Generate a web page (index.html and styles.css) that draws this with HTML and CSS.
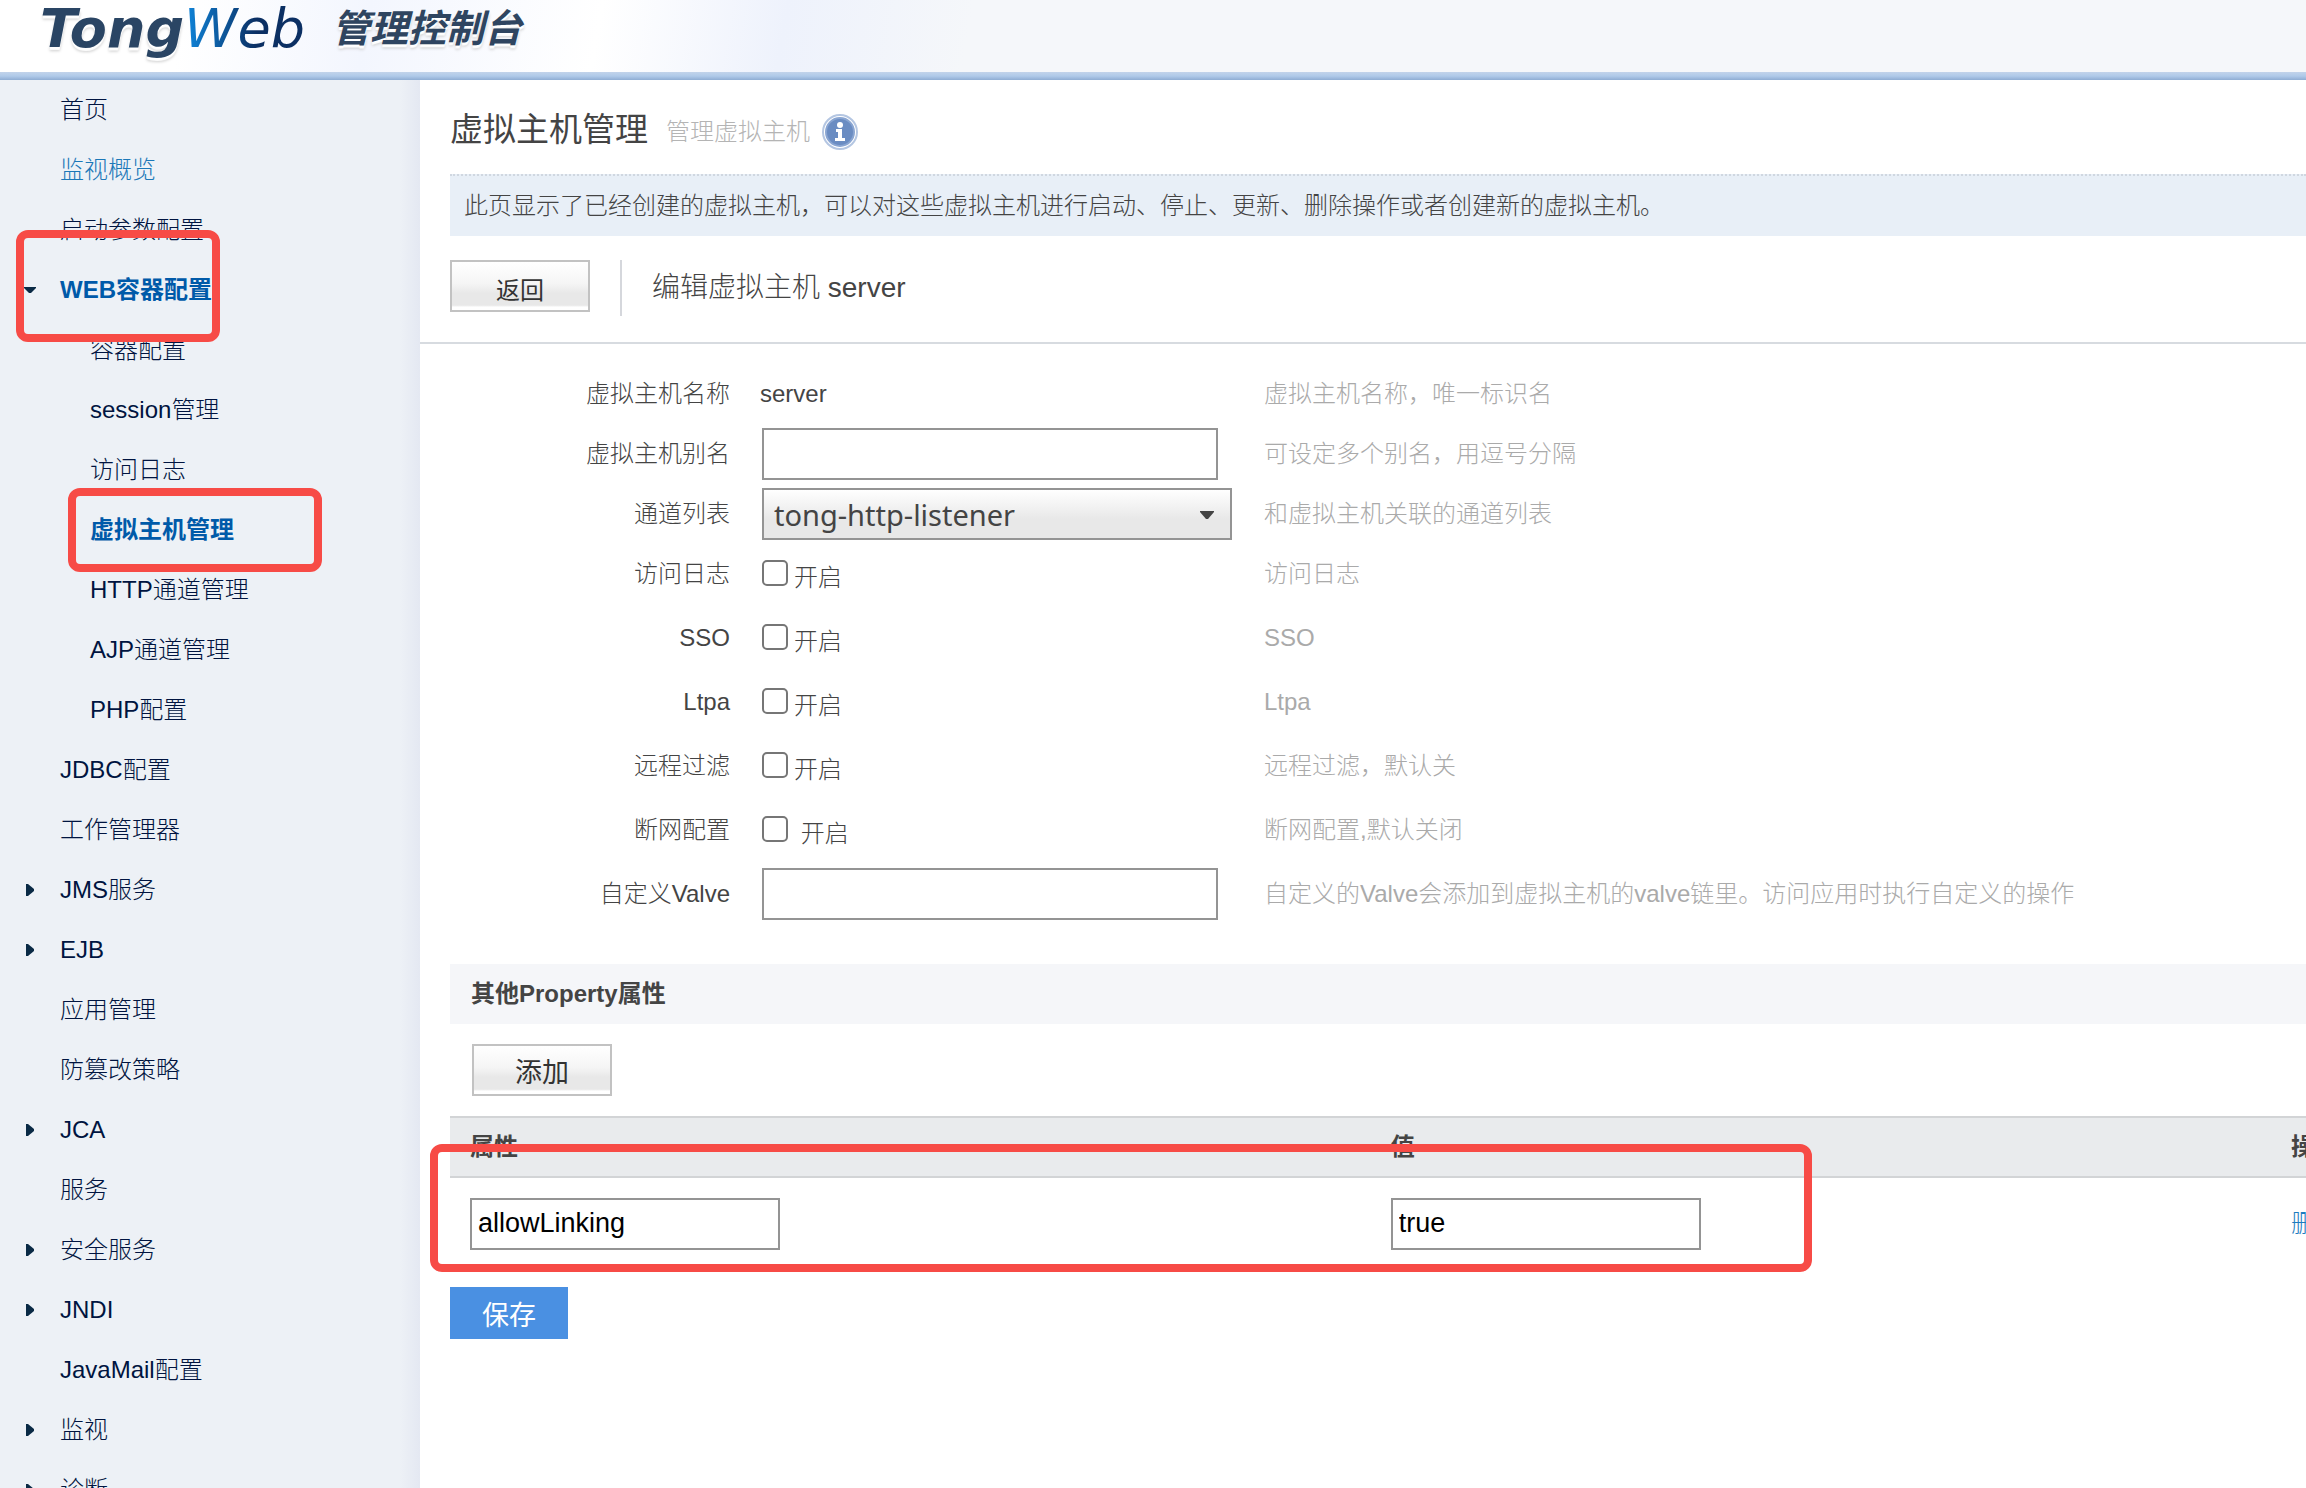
FILE: index.html
```html
<!DOCTYPE html>
<html lang="zh-CN">
<head>
  <meta charset="UTF-8">
  <meta name="viewport" content="width=device-width, initial-scale=1.0">
  <title>TongWeb 管理控制台</title>
  <link rel="stylesheet" href="styles.css">
</head>
<body>
  <header class="header">
    <div class="logo"><span class="tong">Tong</span><span class="web">Web</span></div>
    <div class="logo-title">管理控制台</div>
  </header>

  <div class="layout">
    <nav class="sidebar">
      <ul class="menu">
        <li><a href="#">首页</a></li>
        <li><a href="#" class="hover">监视概览</a></li>
        <li><a href="#">启动参数配置</a></li>
        <li class="open">
          <svg class="arrow" width="12" height="6" viewBox="0 0 12 6"><path d="M0 0h12v1L7 6H5L0 1z"/></svg>
          <a href="#" class="active">WEB容器配置</a>
          <span class="mark mark-group"></span>
        </li>
        <li class="sub"><a href="#">容器配置</a></li>
        <li class="sub"><a href="#">session管理</a></li>
        <li class="sub"><a href="#">访问日志</a></li>
        <li class="sub">
          <a href="#" class="active">虚拟主机管理</a>
          <span class="mark mark-item"></span>
        </li>
        <li class="sub"><a href="#">HTTP通道管理</a></li>
        <li class="sub"><a href="#">AJP通道管理</a></li>
        <li class="sub"><a href="#">PHP配置</a></li>
        <li><a href="#">JDBC配置</a></li>
        <li><a href="#">工作管理器</a></li>
        <li><svg class="arrow" width="8" height="12" viewBox="0 0 8 12"><path d="M0 0h2l6 5v2l-6 5H0z"/></svg><a href="#">JMS服务</a></li>
        <li><svg class="arrow" width="8" height="12" viewBox="0 0 8 12"><path d="M0 0h2l6 5v2l-6 5H0z"/></svg><a href="#">EJB</a></li>
        <li><a href="#">应用管理</a></li>
        <li><a href="#">防篡改策略</a></li>
        <li><svg class="arrow" width="8" height="12" viewBox="0 0 8 12"><path d="M0 0h2l6 5v2l-6 5H0z"/></svg><a href="#">JCA</a></li>
        <li><a href="#">服务</a></li>
        <li><svg class="arrow" width="8" height="12" viewBox="0 0 8 12"><path d="M0 0h2l6 5v2l-6 5H0z"/></svg><a href="#">安全服务</a></li>
        <li><svg class="arrow" width="8" height="12" viewBox="0 0 8 12"><path d="M0 0h2l6 5v2l-6 5H0z"/></svg><a href="#">JNDI</a></li>
        <li><a href="#">JavaMail配置</a></li>
        <li><svg class="arrow" width="8" height="12" viewBox="0 0 8 12"><path d="M0 0h2l6 5v2l-6 5H0z"/></svg><a href="#">监视</a></li>
        <li><svg class="arrow" width="8" height="12" viewBox="0 0 8 12"><path d="M0 0h2l6 5v2l-6 5H0z"/></svg><a href="#">诊断</a></li>
      </ul>
    </nav>

    <main class="main">
      <div class="page-title">
        <h1>虚拟主机管理</h1>
        <small>管理虚拟主机</small>
        <svg width="36" height="38" viewBox="0 0 36 38">
          <circle cx="18" cy="19" r="17" fill="#fff" stroke="#b4c6e2" stroke-width="2"/>
          <circle cx="18" cy="19" r="14" fill="#6a8cc2" stroke="#89a5d2" stroke-width="2"/>
          <circle cx="18" cy="12" r="3" fill="#fff"/>
          <path d="M14 16h6v9h3v3h-10v-3h3v-6h-2z" fill="#fff"/>
        </svg>
      </div>
      <p class="notice">此页显示了已经创建的虚拟主机，可以对这些虚拟主机进行启动、停止、更新、删除操作或者创建新的虚拟主机。</p>

      <div class="toolbar">
        <button type="button" class="btn btn-back">返回</button>
        <h2>编辑虚拟主机 server</h2>
      </div>

      <form class="content">
        <div class="row">
          <span class="label">虚拟主机名称</span>
          <div class="field">server</div>
          <span class="hint">虚拟主机名称，唯一标识名</span>
        </div>
        <div class="row">
          <label class="label" for="alias">虚拟主机别名</label>
          <div class="field"><input type="text" id="alias" class="text"></div>
          <span class="hint">可设定多个别名，用逗号分隔</span>
        </div>
        <div class="row">
          <label class="label" for="listener">通道列表</label>
          <div class="field select">
            <select id="listener"><option>tong-http-listener</option></select>
            <svg width="14" height="8" viewBox="0 0 14 8"><path d="M0 0h14v1L8 8H6L0 1z"/></svg>
          </div>
          <span class="hint">和虚拟主机关联的通道列表</span>
        </div>
        <div class="row check">
          <span class="label">访问日志</span>
          <div class="field"><input type="checkbox" id="accessLog"><label for="accessLog">开启</label></div>
          <span class="hint">访问日志</span>
        </div>
        <div class="row check">
          <span class="label">SSO</span>
          <div class="field"><input type="checkbox" id="sso"><label for="sso">开启</label></div>
          <span class="hint">SSO</span>
        </div>
        <div class="row check">
          <span class="label">Ltpa</span>
          <div class="field"><input type="checkbox" id="ltpa"><label for="ltpa">开启</label></div>
          <span class="hint">Ltpa</span>
        </div>
        <div class="row check">
          <span class="label">远程过滤</span>
          <div class="field"><input type="checkbox" id="remote"><label for="remote">开启</label></div>
          <span class="hint">远程过滤，默认关</span>
        </div>
        <div class="row check">
          <span class="label">断网配置</span>
          <div class="field"><input type="checkbox" id="offline"><label for="offline">&nbsp;开启</label></div>
          <span class="hint">断网配置,默认关闭</span>
        </div>
        <div class="row">
          <label class="label" for="valve">自定义Valve</label>
          <div class="field"><input type="text" id="valve" class="text"></div>
          <span class="hint">自定义的Valve会添加到虚拟主机的valve链里。访问应用时执行自定义的操作</span>
        </div>

        <h3>其他Property属性</h3>
        <button type="button" class="btn btn-add">添加</button>
        <div class="props">
          <table>
            <thead>
              <tr><th class="col-name">属性</th><th class="col-value">值</th><th>操作</th></tr>
            </thead>
            <tbody>
              <tr>
                <td><input type="text" aria-label="属性" value="allowLinking"></td>
                <td><input type="text" aria-label="值" value="true"></td>
                <td><a href="#">删除</a></td>
              </tr>
            </tbody>
          </table>
          <span class="mark mark-props"></span>
        </div>
        <button type="submit" class="save">保存</button>
      </form>
    </main>
  </div>
</body>
</html>
```
FILE: styles.css
```css
* {
  box-sizing: border-box;
}
body {
  margin: 0;
  height: 100vh;
  overflow: hidden;
  display: flex;
  flex-direction: column;
  background: #fff;
  color: #444;
  font: 300 24px/60px "Liberation Sans", "Noto Sans CJK SC", sans-serif;
}
h1, h2, h3, p, ul {
  margin: 0;
  padding: 0;
}
a {
  text-decoration: none;
}
button, input, select {
  margin: 0;
  font-family: inherit;
  font-size: 27px;
}

/* header */
.header {
  flex: none;
  height: 80px;
  padding: 0 40px;
  display: flex;
  background:
    linear-gradient(#c2d3ea, #b0cae9 50%, #8fadd3) bottom / 100% 8px no-repeat,
    linear-gradient(100deg, #fff 8%, #f3f6fe 16%, #fff 26%, #eef2fc 34%, #f5f7fa 42%, #f5f7fa);
  font-style: italic;
  font-weight: bold;
  line-height: 58px;
  text-shadow: 0 3px 1px #fff, 0 4px 3px #ccc;
}
.logo {
  width: 292px;
  font-family: "DejaVu Sans", sans-serif;
  font-size: 54px;
  color: #2a4564;
}
.web {
  font-weight: normal;
  background: linear-gradient(90deg, #0f86dc, #0b2f63 60%);
  -webkit-background-clip: text;
  color: transparent;
  text-shadow: none;
}
.logo-title {
  font-size: 38px;
  color: #2f4560;
}

.layout {
  flex: 1;
  display: flex;
  min-height: 0;
}

/* sidebar */
.sidebar {
  flex: none;
  width: 420px;
  background: linear-gradient(90deg, #edf1f6 400px, #e4e8f2);
}
.menu {
  list-style: none;
}
.menu li {
  position: relative;
  display: flex;
  align-items: center;
  height: 60px;
  padding-left: 60px;
}
.menu li.sub {
  padding-left: 90px;
}
.menu a {
  color: #001440;
}
.menu .hover {
  color: #1c78b8;
}
.menu .active {
  color: #005aa9;
  font-weight: bold;
}
.arrow {
  margin: 0 26px 0 -34px;
  fill: #0a2a45;
}
.open .arrow {
  margin: 0 24px 0 -36px;
}

/* main */
.main {
  flex: 1;
  min-width: 0;
}
.page-title {
  display: flex;
  align-items: center;
  height: 94px;
  padding: 10px 0 0 30px;
}
h1 {
  margin-bottom: 4px;
  font-size: 33px;
  font-weight: normal;
}
.page-title small {
  margin: 0 12px 0 18px;
  font-size: 24px;
  color: #b4b4b4;
}
.notice {
  height: 62px;
  margin-left: 30px;
  padding-left: 14px;
  border-top: 2px dotted #d0d7e0;
  background: #e8eff7;
}
.toolbar {
  display: flex;
  height: 108px;
  padding: 24px 0 0 30px;
  border-bottom: 2px solid #d7dbe0;
}
h2 {
  height: 56px;
  margin-left: 30px;
  padding-left: 30px;
  border-left: 2px solid #d5d7dc;
  font-size: 28px;
  font-weight: 300;
  line-height: 56px;
}
.btn {
  width: 140px;
  height: 52px;
  padding: 0;
  border: 2px solid #c2c2c2;
  background: linear-gradient(#fff, #f5f5f5 45%, #e8e8e8 65%, #e8e8e8 90%, #fff 94%);
  color: #333;
}
.btn-back {
  padding-top: 4px;
  font-size: 24px;
}

/* form */
.content {
  padding: 20px 0 0 30px;
}
.row {
  display: flex;
  height: 60px;
}
.row.check {
  height: 64px;
}
.label {
  width: 280px;
  text-align: right;
}
.field {
  display: flex;
  width: 472px;
  margin: 0 32px 0 30px;
}
.text {
  width: 456px;
  height: 52px;
  margin: 4px 0 0 2px;
}
input[type="text"] {
  padding: 0 6px;
  border: 2px solid #949494;
  background: #fff;
  color: #000;
}
.select {
  position: relative;
}
.select select {
  width: 470px;
  height: 52px;
  margin: 4px 0 0 2px;
  padding: 0 10px;
  border: 2px solid #949494;
  border-radius: 0;
  appearance: none;
  background: linear-gradient(#fff, #f0f0f0 40%, #e8e8e8 60%);
  color: #444;
  font-family: "Noto Sans", sans-serif;
  font-size: 29px;
}
.select svg {
  position: absolute;
  right: 18px;
  top: 27px;
  fill: #444;
  pointer-events: none;
}
.field input[type="checkbox"] {
  width: 26px;
  height: 26px;
  margin: 16px 6px 0 2px;
  border: 2px solid #767676;
  border-radius: 5px;
  appearance: none;
  background: #fff;
}
.field input[type="checkbox"]:checked {
  background: #4a90e2;
}
.check .field label {
  line-height: 68px;
}
.hint {
  color: #aaa;
}

/* properties */
h3 {
  height: 60px;
  margin-top: 40px;
  padding-left: 21px;
  background: #f5f6f9;
  font-size: 24px;
}
.btn-add {
  display: block;
  margin: 20px 0 20px 22px;
}
.props {
  position: relative;
}
table {
  width: 110%;
  table-layout: fixed;
  border-collapse: collapse;
}
.col-name {
  width: 45.1%;
}
.col-value {
  width: 44.1%;
}
th, td {
  padding: 0 20px;
  text-align: left;
}
th {
  height: 60px;
  border: solid #d2d4d6;
  border-width: 2px 0;
  background: #e9ebed;
  line-height: 56px;
}
td {
  height: 92px;
}
td input[type="text"] {
  display: block;
  width: 310px;
  height: 52px;
}
td a {
  color: #1c7cc0;
}
.save {
  display: block;
  width: 118px;
  height: 52px;
  margin-top: 18px;
  padding: 0;
  border: 0;
  background: #4a90e2;
  color: #fff;
}

/* red highlight frames */
.mark {
  position: absolute;
  z-index: 1;
  border: 8px solid #f74b46;
  border-radius: 12px;
  pointer-events: none;
}
.mark-group {
  left: 16px;
  top: -30px;
  width: 204px;
  height: 112px;
}
.mark-item {
  left: 68px;
  top: -12px;
  width: 254px;
  height: 84px;
}
.mark-props {
  left: -20px;
  top: 28px;
  width: 1382px;
  height: 128px;
}
```
